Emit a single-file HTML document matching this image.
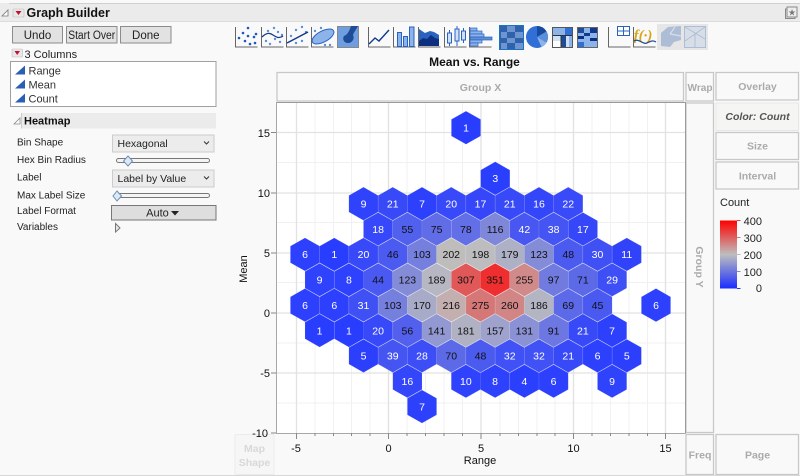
<!DOCTYPE html>
<html><head><meta charset="utf-8"><style>
html,body{margin:0;padding:0;background:#f9f9f9}
body{width:800px;height:476px;overflow:hidden;position:relative;font-family:"Liberation Sans",sans-serif;color:#222}
svg{position:absolute;left:0;top:0}
text{font-family:"Liberation Sans",sans-serif}
.h text,.v text{font-size:10.5px;text-anchor:middle}
.v text{fill:#fff}
.d text{fill:#111}
.zone{fill:#f9f9f9;stroke:#c8c8c8;stroke-width:1.3}
.zt{font-size:10.5px;font-weight:bold;fill:#aaa;text-anchor:middle}
.lab{font-size:10px;fill:#222}
.btn{fill:#e2e2e2;stroke:#8c8c8c}
.bt{font-size:11.5px;fill:#222;text-anchor:middle}
.ax{font-size:11px;fill:#111;text-anchor:middle}
.ay{font-size:11px;fill:#111;text-anchor:end}
</style></head><body>
<svg width="800" height="476" viewBox="0 0 800 476">
<defs>
<polygon id="h" points="0,-16.6 14.62,-8.3 14.62,8.3 0,16.6 -14.62,8.3 -14.62,-8.3" stroke="#fff" stroke-opacity=".14" stroke-width=".6"/>
<polygon id="tri" points="0,9 10,9 10,0"/>
</defs>
<rect width="800" height="476" fill="#f9f9f9"/>
<!-- header -->
<rect x="0" y="3" width="800" height="19" fill="#ebebeb"/>
<line x1="9" y1="3.5" x2="800" y2="3.5" stroke="#d0d0d0"/>
<line x1="0" y1="21.5" x2="800" y2="21.5" stroke="#dcdcdc"/>
<polygon points="2,16 8,10 8,16" fill="#fff" stroke="#777" stroke-width=".8"/>
<rect x="13" y="9" width="11" height="8" rx="1" fill="#e8e8e8" stroke="#bbb" stroke-width=".6"/>
<polygon points="15.5,11 21.5,11 18.5,15" fill="#c8102e"/>
<text x="26.5" y="17" font-size="12.5" font-weight="bold" fill="#111">Graph Builder</text>
<rect x="787" y="7" width="10" height="10" fill="#eee" stroke="#888"/>
<path d="M787 9h-1.500v9.500h9.500v-1.500" fill="none" stroke="#888"/>
<text x="792" y="15.500" font-size="9" fill="#777" text-anchor="middle">★</text>
<!-- buttons -->
<rect class="btn" x="12.500" y="26.500" width="50" height="16.500"/><text class="bt" x="37.500" y="39">Undo</text>
<rect class="btn" x="66.500" y="26.500" width="50.500" height="16.500"/><text class="bt" x="91.700" y="39" textLength="47" lengthAdjust="spacingAndGlyphs">Start Over</text>
<rect class="btn" x="120.500" y="26.500" width="50.500" height="16.500"/><text class="bt" x="145.800" y="39">Done</text>
<rect x="12" y="49" width="10.500" height="8" rx="1" fill="#e8e8e8" stroke="#bbb" stroke-width=".6"/>
<polygon points="14.500,51 20,51 17.200,55" fill="#c8102e"/>
<text x="24.500" y="58" font-size="11" fill="#222">3 Columns</text>
<rect x="10.500" y="61.500" width="205.500" height="45" fill="#fff" stroke="#a0a0a0"/>
<use href="#tri" x="15" y="65.500" fill="#2b5fb5"/><text x="28.500" y="74.500" font-size="11" fill="#333">Range</text>
<use href="#tri" x="15" y="79.500" fill="#2b5fb5"/><text x="28.500" y="88.500" font-size="11" fill="#333">Mean</text>
<use href="#tri" x="15" y="93.500" fill="#2b5fb5"/><text x="28.500" y="102.500" font-size="11" fill="#333">Count</text>
<polygon points="14,124 20,118 20,124" fill="#fff" stroke="#888" stroke-width=".8"/>
<rect x="21.500" y="113" width="194.500" height="15.500" fill="#ebebeb"/>
<line x1="21.500" y1="113" x2="21.500" y2="128.500" stroke="#ccc"/>
<text x="24" y="124.500" font-size="11" font-weight="bold" fill="#111">Heatmap</text>
<text class="lab" x="17" y="145.500">Bin Shape</text>
<text class="lab" x="17" y="163">Hex Bin Radius</text>
<text class="lab" x="17" y="180.500">Label</text>
<text class="lab" x="17" y="198.500">Max Label Size</text>
<text class="lab" x="17" y="214">Label Format</text>
<text class="lab" x="17" y="230">Variables</text>
<rect x="112.500" y="135" width="101.500" height="17" fill="#ececec" stroke="#ccc"/>
<text x="117.500" y="147" font-size="10.500" fill="#222">Hexagonal</text>
<path d="M204 141.500l2.500 2.500 2.500-2.500" fill="none" stroke="#333"/>
<rect x="112.500" y="170" width="101.500" height="17" fill="#ececec" stroke="#ccc"/>
<text x="117.500" y="182" font-size="10.500" fill="#222">Label by Value</text>
<path d="M204 176.500l2.500 2.500 2.500-2.500" fill="none" stroke="#333"/>
<rect x="116.500" y="158.500" width="93" height="4" rx="2" fill="#f4f4f4" stroke="#777"/>
<polygon points="128,156 132.500,161 128,166 123.500,161" fill="#dce8f5" stroke="#6d8fb5"/>
<rect x="116.500" y="193.500" width="93" height="4" rx="2" fill="#f4f4f4" stroke="#777"/>
<polygon points="117,191 121.500,196 117,201 113,196" fill="#dce8f5" stroke="#6d8fb5"/>
<rect x="111.500" y="205.500" width="104.500" height="14.500" fill="#dedede" stroke="#777"/>
<text x="157.500" y="216.500" font-size="11" fill="#222" text-anchor="middle">Auto</text>
<polygon points="171,211 179,211 175,215.500" fill="#222"/>
<polygon points="115.500,223.500 120,228 115.500,232" fill="#e8e8e8" stroke="#777"/>
<!-- toolbar icons -->
<g fill="none" stroke="#666" stroke-width="1">
<path d="M235.500 27v20h22M261.500 27v20h22M286.500 27v20h22M311.500 27v20h22M368.500 27v20h22M393.500 27v20h22M418.500 27v20h22M444.500 27v20h22M469.500 27v20h22M608.500 27v20h22M633.500 27v20h22"/>
</g>
<g fill="#1f58b8">
<circle cx="248" cy="28" r="1.300"/><circle cx="243" cy="33" r="1.300"/><circle cx="256" cy="34" r="1.300"/><circle cx="248" cy="36" r="1.300"/><circle cx="239" cy="38" r="1.300"/><circle cx="254" cy="37" r="1.300"/><circle cx="245" cy="41" r="1.300"/><circle cx="250" cy="44" r="1.300"/><circle cx="255" cy="43" r="1.300"/>
</g>
<g fill="#5b8fd8">
<circle cx="268" cy="31" r="1.200"/><circle cx="274" cy="28" r="1.200"/><circle cx="278" cy="32" r="1.200"/><circle cx="266" cy="41" r="1.200"/><circle cx="270" cy="44" r="1.200"/><circle cx="275" cy="39" r="1.200"/><circle cx="280" cy="42" r="1.200"/><circle cx="282" cy="35" r="1.200"/>
<circle cx="296" cy="30" r="1.200"/><circle cx="302" cy="27" r="1.200"/><circle cx="306" cy="32" r="1.200"/><circle cx="291" cy="36" r="1.200"/><circle cx="296" cy="43" r="1.200"/><circle cx="302" cy="41" r="1.200"/>
<circle cx="321" cy="28" r="1.200"/><circle cx="315" cy="31" r="1.200"/><circle cx="330" cy="45" r="1.200"/><circle cx="325" cy="45" r="1.200"/>
</g>
<path d="M262 37c5-5 8-4 11-2s6 4 10 1" fill="none" stroke="#113a8c" stroke-width="1.300"/>
<line x1="287" y1="43" x2="308" y2="32" stroke="#113a8c" stroke-width="1.500"/>
<ellipse cx="323" cy="36.500" rx="12" ry="5.500" transform="rotate(-28 323 36.500)" fill="#8db4ea" stroke="#2a62c0"/>
<rect x="337" y="26" width="22" height="22" fill="#6f9ee0"/>
<rect x="337.500" y="26.500" width="21" height="21" fill="none" stroke="#888"/>
<path d="M351 26h7c-2 4-4 6-5 9 2 4-1 8-5 8s-6-4-4-7c3-1 5-4 7-10z" fill="#1f4c96"/>
<path d="M369 44l6-6 4 3 10-11" fill="none" stroke="#113a8c" stroke-width="1.400"/>
<g fill="#8db4ea" stroke="#2a62c0"><rect x="397.500" y="32.500" width="4" height="14"/><rect x="403.500" y="36.500" width="4" height="10"/><rect x="409.500" y="27" width="4.500" height="19.500"/></g>
<path d="M419 29l6 4 5-2 4 1 5 3v11h-20z" fill="#2a62c0"/>
<path d="M419 41l4-3 4 1 4-4 4 3 4 1v7h-20z" fill="#0c2f80"/>
<g fill="#cfe0f7" stroke="#2a62c0"><rect x="447.500" y="33" width="4" height="10"/><rect x="455" y="29" width="4" height="12"/><rect x="461.500" y="31" width="4" height="9"/></g>
<path d="M449.500 30v3M449.500 43v3M457 26v3M457 41v5M463.500 28v3M463.500 40v3" stroke="#2a62c0"/>
<g fill="#8db4ea" stroke="#2a62c0" stroke-width=".7"><rect x="470" y="28" width="7" height="3"/><rect x="470" y="31" width="12" height="3"/><rect x="470" y="34" width="14" height="3"/><rect x="470" y="37" width="22" height="3" fill="#5b8fd8"/><rect x="470" y="40" width="12" height="3"/><rect x="470" y="43" width="8" height="3"/></g>
<!-- selected heatmap icon -->
<rect x="499.500" y="25.500" width="24" height="24" fill="#2f62ad" stroke="#1a73c4"/>
<g fill="#6f95cf"><rect x="507" y="26" width="8" height="6"/><rect x="501" y="32" width="6" height="6"/><rect x="515" y="32" width="8" height="6"/><rect x="507" y="38" width="8" height="5"/><rect x="501" y="43" width="6" height="6"/><rect x="515" y="43" width="8" height="6"/></g>
<circle cx="537" cy="37" r="11" fill="#2f6fd6"/>
<path d="M537 37l9.500-5.500a11 11 0 0 0-9.500-5.500z" fill="#174a9e"/>
<path d="M537 37l9.500 5.500a11 11 0 0 1-5 4.500z" fill="#8db4ea"/>
<path d="M537 37l9.500-5.500a11 11 0 0 1 0 11z" fill="#5b8fd8"/>
<rect x="552.500" y="27.500" width="20" height="20" fill="#8db4ea" stroke="#555"/>
<rect x="565" y="28" width="7" height="7" fill="#2f6fd6"/><rect x="553" y="36" width="8" height="5" fill="#cfe0f7"/><rect x="561" y="36" width="5" height="11" fill="#1f4c96"/><rect x="566" y="36" width="3" height="11" fill="#cfe0f7"/><rect x="569" y="36" width="3" height="11" fill="#8db4ea"/><rect x="553" y="41" width="8" height="6" fill="#fff"/>
<path d="M553 35.500h19M561 36v11" stroke="#333" fill="none"/>
<rect x="577.500" y="27.500" width="20" height="20" fill="#8db4ea" stroke="#666"/>
<rect x="578" y="28" width="6" height="5" fill="#1f4c96"/><rect x="590" y="28" width="7" height="5" fill="#113a8c"/><rect x="584" y="33" width="6" height="3" fill="#113a8c"/><rect x="578" y="36" width="6" height="3" fill="#0c2f80"/><rect x="590" y="38" width="7" height="3" fill="#0c2f80"/><rect x="578" y="42" width="6" height="5" fill="#2f6fd6"/>
<rect x="617.500" y="26.500" width="12" height="9" fill="#fff" stroke="#2a62c0"/><path d="M623.500 27v8M618 31h11" stroke="#2a62c0"/>
<text x="643" y="40" font-size="15" font-style="italic" font-weight="bold" fill="#d9a514" font-family="Liberation Serif" text-anchor="middle" style="font-family:'Liberation Serif',serif">f(·)</text>
<path d="M634 41c5-3 9 4 13 2s6-3 9-1" fill="none" stroke="#1f4c96" stroke-width="1.200"/>
<rect x="657" y="24" width="51" height="26" fill="#e6e6e6"/>
<path d="M661 33l7-6 13-1v14l-7 2-4 5-9-1z" fill="#aebdd6"/>
<path d="M670 34l5-7M670 34l11 2" stroke="#d8dee8" stroke-width="1.200"/>
<rect x="684.500" y="26.500" width="21" height="21" fill="#d8dee8" stroke="#aebdd6"/>
<path d="M685 27l20 12M705 27l-20 14M695 34v13" stroke="#aebdd6" fill="none"/>
<!-- title -->
<text x="474.500" y="66" font-size="12" font-weight="bold" fill="#111" text-anchor="middle">Mean vs. Range</text>
<!-- zones -->
<rect class="zone" x="277" y="72.500" width="406.500" height="28.500"/><text class="zt" x="480.500" y="91">Group X</text>
<rect class="zone" x="686" y="72.500" width="27.500" height="28.500"/><text class="zt" x="700" y="91" textLength="25" lengthAdjust="spacingAndGlyphs">Wrap</text>
<rect class="zone" x="716" y="72.500" width="82.500" height="27.500"/><text class="zt" x="757.500" y="90">Overlay</text>
<rect x="716" y="103" width="82.500" height="27.500" fill="#f5f5f3" stroke="#e6e6e6"/><text x="757.500" y="120" font-size="10.500" font-weight="bold" font-style="italic" fill="#555" text-anchor="middle">Color: Count</text>
<rect class="zone" x="716" y="132.500" width="82.500" height="27"/><text class="zt" x="757.500" y="149.500">Size</text>
<rect class="zone" x="716" y="162" width="82.500" height="27"/><text class="zt" x="757.500" y="179.500">Interval</text>
<rect class="zone" x="686" y="103" width="27.500" height="329.500"/>
<text class="zt" transform="translate(696,267) rotate(90)">Group Y</text>
<rect class="zone" x="686" y="434.500" width="27.500" height="40"/><text class="zt" x="700" y="458.500">Freq</text>
<rect class="zone" x="716" y="434.500" width="82.500" height="40"/><text class="zt" x="757.500" y="458.500">Page</text>
<rect x="235" y="434.500" width="39" height="40" rx="1" fill="#f6f6f6" stroke="#ececec"/>
<text x="254.500" y="452" font-size="10.500" font-weight="bold" fill="#d8d8d8" text-anchor="middle">Map</text>
<text x="254.500" y="466" font-size="10.500" font-weight="bold" fill="#d8d8d8" text-anchor="middle">Shape</text>
<line x1="0" y1="475.500" x2="800" y2="475.500" stroke="#d8d8d8"/>
<!-- plot -->
<rect x="276.500" y="102.500" width="408.500" height="330.500" fill="#fff"/>
<g stroke="#f1f1f1" stroke-width="1">
<path d="M315 103v330M333.500 103v330M351.500 103v330M370 103v330M407 103v330M425.500 103v330M444 103v330M462.500 103v330M500 103v330M518.500 103v330M537 103v330M555 103v330M592 103v330M610.500 103v330M629 103v330M647.500 103v330M162 0M277 162.500h408M277 222.500h408M277 282.500h408M277 343h408M277 403h408"/>
</g>
<g stroke="#e2e2e2" stroke-width="1.300">
<path d="M296.500 103v330M388.500 103v330M481 103v330M573.500 103v330M665.500 103v330M277 132.500h408M277 193h408M277 253h408M277 313h408M277 373h408"/>
</g>
<path d="M276 102.500h409.500v331" fill="none" stroke="#9a9a9a"/>
<path d="M276.500 102v331.500h409" fill="none" stroke="#a8a8a8"/>
<g stroke="#888" fill="none">
<path d="M296.500 433v6M388.500 433v6M481 433v6M573.500 433v6M665.500 433v6M315 433v3M333.500 433v3M351.500 433v3M370 433v3M407 433v3M425.500 433v3M444 433v3M462.500 433v3M500 433v3M518.500 433v3M537 433v3M555 433v3M592 433v3M610.500 433v3M629 433v3M647.500 433v3"/>
<path d="M271 132.500h5M271 193h5M271 253h5M271 313h5M271 373h5M271 433h5"/>
</g>
<text class="ax" x="296" y="452">-5</text><text class="ax" x="388.500" y="452">0</text><text class="ax" x="481" y="452">5</text><text class="ax" x="573.500" y="452">10</text><text class="ax" x="665.500" y="452">15</text>
<text class="ay" x="270" y="137">15</text><text class="ay" x="270" y="197">10</text><text class="ay" x="270" y="257">5</text><text class="ay" x="270" y="317">0</text><text class="ay" x="270" y="377">-5</text><text class="ay" x="268" y="437">-10</text>
<text class="ax" x="480" y="464">Range</text>
<text class="ax" transform="translate(247,269) rotate(-90)">Mean</text>
<!-- hexes -->
<g>
<use href="#h" x="466" y="127.700" fill="rgb(41,61,255)"/>
<use href="#h" x="495.250" y="178.400" fill="rgb(42,62,254)"/>
<use href="#h" x="363.500" y="203.750" fill="rgb(47,66,252)"/><use href="#h" x="392.750" y="203.750" fill="rgb(56,74,248)"/><use href="#h" x="422" y="203.750" fill="rgb(45,65,253)"/><use href="#h" x="451.250" y="203.750" fill="rgb(55,73,248)"/><use href="#h" x="480.500" y="203.750" fill="rgb(53,71,249)"/><use href="#h" x="509.750" y="203.750" fill="rgb(56,74,248)"/><use href="#h" x="539" y="203.750" fill="rgb(52,70,250)"/><use href="#h" x="568.250" y="203.750" fill="rgb(57,74,248)"/>
<use href="#h" x="378.100" y="229.100" fill="rgb(54,72,249)"/><use href="#h" x="407.400" y="229.100" fill="rgb(81,96,237)"/><use href="#h" x="436.600" y="229.100" fill="rgb(96,109,231)"/><use href="#h" x="465.900" y="229.100" fill="rgb(99,111,230)"/><use href="#h" x="495.100" y="229.100" fill="rgb(127,135,217)"/><use href="#h" x="524.400" y="229.100" fill="rgb(72,87,241)"/><use href="#h" x="553.600" y="229.100" fill="rgb(69,85,243)"/><use href="#h" x="582.900" y="229.100" fill="rgb(53,71,249)"/>
<use href="#h" x="305" y="254.450" fill="rgb(45,64,253)"/><use href="#h" x="334.250" y="254.450" fill="rgb(41,61,255)"/><use href="#h" x="363.500" y="254.450" fill="rgb(55,73,248)"/><use href="#h" x="392.750" y="254.450" fill="rgb(75,90,240)"/><use href="#h" x="422" y="254.450" fill="rgb(117,127,222)"/><use href="#h" x="451.250" y="254.450" fill="rgb(191,188,188)"/><use href="#h" x="480.500" y="254.450" fill="rgb(189,189,191)"/><use href="#h" x="509.750" y="254.450" fill="rgb(174,176,197)"/><use href="#h" x="539" y="254.450" fill="rgb(132,140,215)"/><use href="#h" x="568.250" y="254.450" fill="rgb(76,91,239)"/><use href="#h" x="597.500" y="254.450" fill="rgb(63,80,245)"/><use href="#h" x="626.750" y="254.450" fill="rgb(48,67,251)"/>
<use href="#h" x="319.600" y="279.800" fill="rgb(47,66,252)"/><use href="#h" x="348.900" y="279.800" fill="rgb(46,65,252)"/><use href="#h" x="378.100" y="279.800" fill="rgb(73,89,241)"/><use href="#h" x="407.400" y="279.800" fill="rgb(132,140,215)"/><use href="#h" x="436.600" y="279.800" fill="rgb(182,183,194)"/><use href="#h" x="465.900" y="279.800" fill="rgb(225,88,88)"/><use href="#h" x="495.100" y="279.800" fill="rgb(239,47,47)"/><use href="#h" x="524.400" y="279.800" fill="rgb(208,138,138)"/><use href="#h" x="553.600" y="279.800" fill="rgb(113,123,223)"/><use href="#h" x="582.900" y="279.800" fill="rgb(93,106,232)"/><use href="#h" x="612.100" y="279.800" fill="rgb(62,79,246)"/>
<use href="#h" x="305" y="305.150" fill="rgb(45,64,253)"/><use href="#h" x="334.250" y="305.150" fill="rgb(45,64,253)"/><use href="#h" x="363.500" y="305.150" fill="rgb(63,80,245)"/><use href="#h" x="392.750" y="305.150" fill="rgb(117,127,222)"/><use href="#h" x="422" y="305.150" fill="rgb(168,171,200)"/><use href="#h" x="451.250" y="305.150" fill="rgb(195,175,175)"/><use href="#h" x="480.500" y="305.150" fill="rgb(214,119,119)"/><use href="#h" x="509.750" y="305.150" fill="rgb(210,133,133)"/><use href="#h" x="539" y="305.150" fill="rgb(180,181,195)"/><use href="#h" x="568.250" y="305.150" fill="rgb(92,105,233)"/><use href="#h" x="597.500" y="305.150" fill="rgb(74,89,240)"/><use href="#h" x="656" y="305.150" fill="rgb(45,64,253)"/>
<use href="#h" x="319.600" y="330.500" fill="rgb(41,61,255)"/><use href="#h" x="348.900" y="330.500" fill="rgb(41,61,255)"/><use href="#h" x="378.100" y="330.500" fill="rgb(55,73,248)"/><use href="#h" x="407.400" y="330.500" fill="rgb(82,96,237)"/><use href="#h" x="436.600" y="330.500" fill="rgb(146,152,209)"/><use href="#h" x="465.900" y="330.500" fill="rgb(176,178,196)"/><use href="#h" x="495.100" y="330.500" fill="rgb(158,162,204)"/><use href="#h" x="524.400" y="330.500" fill="rgb(138,145,212)"/><use href="#h" x="553.600" y="330.500" fill="rgb(108,119,225)"/><use href="#h" x="582.900" y="330.500" fill="rgb(56,74,248)"/><use href="#h" x="612.100" y="330.500" fill="rgb(45,65,253)"/>
<use href="#h" x="363.500" y="355.850" fill="rgb(44,63,253)"/><use href="#h" x="392.750" y="355.850" fill="rgb(69,85,242)"/><use href="#h" x="422" y="355.850" fill="rgb(61,78,246)"/><use href="#h" x="451.250" y="355.850" fill="rgb(93,106,232)"/><use href="#h" x="480.500" y="355.850" fill="rgb(76,91,239)"/><use href="#h" x="509.750" y="355.850" fill="rgb(64,81,245)"/><use href="#h" x="539" y="355.850" fill="rgb(64,81,245)"/><use href="#h" x="568.250" y="355.850" fill="rgb(56,74,248)"/><use href="#h" x="597.500" y="355.850" fill="rgb(45,64,253)"/><use href="#h" x="626.750" y="355.850" fill="rgb(44,63,253)"/>
<use href="#h" x="407.400" y="381.200" fill="rgb(52,70,250)"/><use href="#h" x="465.900" y="381.200" fill="rgb(48,67,252)"/><use href="#h" x="495.100" y="381.200" fill="rgb(46,65,252)"/><use href="#h" x="524.400" y="381.200" fill="rgb(43,63,254)"/><use href="#h" x="553.600" y="381.200" fill="rgb(45,64,253)"/><use href="#h" x="612.100" y="381.200" fill="rgb(47,66,252)"/>
<use href="#h" x="422" y="406.550" fill="rgb(45,65,253)"/>
</g>
<!-- labels: light -->
<g class="v">
<text x="466" y="131.500">1</text><text x="495.250" y="182.200">3</text>
<text x="363.500" y="207.500">9</text><text x="392.750" y="207.500">21</text><text x="422" y="207.500">7</text><text x="451.250" y="207.500">20</text><text x="480.500" y="207.500">17</text><text x="509.750" y="207.500">21</text><text x="539" y="207.500">16</text><text x="568.250" y="207.500">22</text>
<text x="378.100" y="232.900">18</text><text x="524.400" y="232.900">42</text><text x="553.600" y="232.900">38</text><text x="582.900" y="232.900">17</text>
<text x="305" y="258.200">6</text><text x="334.250" y="258.200">1</text><text x="363.500" y="258.200">20</text><text x="597.500" y="258.200">30</text><text x="626.750" y="258.200">11</text>
<text x="319.600" y="283.600">9</text><text x="348.900" y="283.600">8</text><text x="612.100" y="283.600">29</text>
<text x="305" y="308.900">6</text><text x="334.250" y="308.900">6</text><text x="363.500" y="308.900">31</text><text x="656" y="308.900">6</text>
<text x="319.600" y="334.300">1</text><text x="348.900" y="334.300">1</text><text x="378.100" y="334.300">20</text><text x="582.900" y="334.300">21</text><text x="612.100" y="334.300">7</text>
<text x="363.500" y="359.600">5</text><text x="392.750" y="359.600">39</text><text x="422" y="359.600">28</text><text x="509.750" y="359.600">32</text><text x="539" y="359.600">32</text><text x="568.250" y="359.600">21</text><text x="597.500" y="359.600">6</text><text x="626.750" y="359.600">5</text>
<text x="407.400" y="385">16</text><text x="465.900" y="385">10</text><text x="495.100" y="385">8</text><text x="524.400" y="385">4</text><text x="553.600" y="385">6</text><text x="612.100" y="385">9</text>
<text x="422" y="410.300">7</text>
</g>
<!-- labels: dark -->
<g class="h d">
<text x="407.400" y="232.900">55</text><text x="436.600" y="232.900">75</text><text x="465.900" y="232.900">78</text><text x="495.100" y="232.900">116</text>
<text x="392.750" y="258.200">46</text><text x="422" y="258.200">103</text><text x="451.250" y="258.200">202</text><text x="480.500" y="258.200">198</text><text x="509.750" y="258.200">179</text><text x="539" y="258.200">123</text><text x="568.250" y="258.200">48</text>
<text x="378.100" y="283.600">44</text><text x="407.400" y="283.600">123</text><text x="436.600" y="283.600">189</text><text x="465.900" y="283.600">307</text><text x="495.100" y="283.600">351</text><text x="524.400" y="283.600">255</text><text x="553.600" y="283.600">97</text><text x="582.900" y="283.600">71</text>
<text x="392.750" y="308.900">103</text><text x="422" y="308.900">170</text><text x="451.250" y="308.900">216</text><text x="480.500" y="308.900">275</text><text x="509.750" y="308.900">260</text><text x="539" y="308.900">186</text><text x="568.250" y="308.900">69</text><text x="597.500" y="308.900">45</text>
<text x="407.400" y="334.300">56</text><text x="436.600" y="334.300">141</text><text x="465.900" y="334.300">181</text><text x="495.100" y="334.300">157</text><text x="524.400" y="334.300">131</text><text x="553.600" y="334.300">91</text>
<text x="451.250" y="359.600">70</text><text x="480.500" y="359.600">48</text>
</g>
<!-- legend -->
<defs><linearGradient id="lg" x1="0" y1="0" x2="0" y2="1"><stop offset="0" stop-color="#ff0000"/><stop offset=".5" stop-color="#bebebe"/><stop offset="1" stop-color="#1a2dff"/></linearGradient></defs>
<text x="720" y="206" font-size="11" fill="#222">Count</text>
<rect x="720" y="220.500" width="17" height="68" fill="url(#lg)"/>
<path d="M737 220.500h3.500" stroke="#d44"/><path d="M737 237.500h3.500" stroke="#c77"/><path d="M737 254.500h3.500" stroke="#bbb"/><path d="M737 271.500h3.500" stroke="#88c"/><path d="M737 288.500h3.500" stroke="#33f"/>
<g font-size="11" fill="#222" text-anchor="end">
<text x="762" y="225">400</text><text x="762" y="242">300</text><text x="762" y="259">200</text><text x="762" y="276">100</text><text x="762" y="292">0</text>
</g>
</svg>
</body></html>
